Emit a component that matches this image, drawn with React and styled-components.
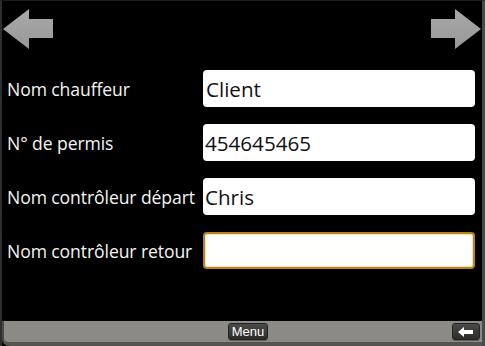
import React from 'react'
import styled, { createGlobalStyle } from 'styled-components'

const GlobalStyle = createGlobalStyle`
  html, body {
    margin: 0;
    padding: 0;
    background: #000;
  }
  body {
    font-family: 'Open Sans', 'DejaVu Sans', sans-serif;
  }
`

const Screen = styled.div`
  width: 485px;
  height: 346px;
  box-sizing: border-box;
  display: flex;
  flex-direction: column;
  background: #000;
  border-left: 2px solid #2e2e2e;
  border-right: 3px solid #4a4a4a;
  border-top: 1px solid #1c1c1c;
  overflow: hidden;
`

const Header = styled.div`
  height: 56px;
  display: flex;
  justify-content: space-between;
  align-items: flex-start;
  padding: 7px 0 0 0;
  box-sizing: border-box;
`

const ArrowButton = styled.button`
  width: 52px;
  height: 42px;
  padding: 0;
  border: 0;
  background: transparent;
  cursor: pointer;
  svg {
    display: block;
  }
`

const Form = styled.div`
  display: flex;
  flex-direction: column;
  gap: 17px;
  padding: 13px 8px 0 5px;
  flex: 1;
`

const Row = styled.div`
  display: grid;
  grid-template-columns: 196px 1fr;
  align-items: center;
  height: 37px;
`

const Label = styled.label`
  color: #f4f4f4;
  font-size: 17.6px;
  white-space: nowrap;
  letter-spacing: -0.1px;
`

const Field = styled.input`
  box-sizing: border-box;
  height: 37px;
  width: 272px;
  border-radius: 4px;
  border: ${(p) => (p.$focused ? '2px solid #b8821c' : '0')};
  box-shadow: ${(p) => (p.$focused ? 'inset 0 0 0 1px #f3e2b8' : 'none')};
  background: ${(p) => (p.$focused ? '#fffffd' : '#fff')};
  font-family: 'Open Sans', 'DejaVu Sans', sans-serif;
  font-size: 20.6px;
  color: #111;
  padding: 0 0 0 ${(p) => p.$pad || 2}px;
  outline: none;
`

const Footer = styled.div`
  height: 25px;
  box-sizing: border-box;
  background: #8b8a85;
  border-bottom: 4px solid #55544f;
  border-left: 2px solid #4a4a46;
  border-bottom-left-radius: 7px;
  display: flex;
  align-items: flex-start;
  justify-content: center;
  position: relative;
  padding-top: 2px;
`

const BarButton = styled.button`
  height: 17px;
  padding: 0 6px;
  background: linear-gradient(#4a4a48, #2c2c2b);
  border: 1px solid #222;
  border-radius: 3px;
  box-shadow: 0 1px 0 #5c5b57;
  color: #fff;
  font-family: 'Liberation Sans', Arial, sans-serif;
  font-size: 13px;
  line-height: 15px;
  display: flex;
  align-items: center;
  justify-content: center;
`

const MenuButton = styled(BarButton)`
  margin-left: 10px;
  width: 40px;
`

const BackButton = styled(BarButton)`
  position: absolute;
  right: 2px;
  top: 2px;
  width: 28px;
  padding: 0;
`

const BigArrow = ({ flip }) => (
  <svg width="52" height="42" viewBox="0 0 52 42">
    <defs>
      <linearGradient id={flip ? 'gr' : 'gl'} x1="0" y1="0" x2="0" y2="1">
        <stop offset="0" stopColor="#a9a9a9" />
        <stop offset="1" stopColor="#989898" />
      </linearGradient>
    </defs>
    <polygon
      transform={flip ? 'translate(52,0) scale(-1,1)' : undefined}
      points="1,21 27,1 27,11 51,11 51,30 27,30 27,41"
      fill={`url(#${flip ? 'gr' : 'gl'})`}
    />
  </svg>
)

const rows = [
  { label: 'Nom chauffeur', value: 'Client', pad: 3 },
  { label: 'N° de permis', value: '454645465', pad: 0 },
  { label: 'Nom contrôleur départ', value: 'Chris', pad: 2 },
  { label: 'Nom contrôleur retour', value: '', focused: true },
]

export default function App() {
  return (
    <Screen>
      <GlobalStyle />
      <Header>
        <ArrowButton aria-label="Précédent">
          <BigArrow />
        </ArrowButton>
        <ArrowButton aria-label="Suivant">
          <BigArrow flip />
        </ArrowButton>
      </Header>
      <Form>
        {rows.map((r) => (
          <Row key={r.label}>
            <Label>{r.label}</Label>
            <Field defaultValue={r.value} $focused={r.focused} $pad={r.pad} />
          </Row>
        ))}
      </Form>
      <Footer>
        <MenuButton>Menu</MenuButton>
        <BackButton aria-label="Retour">
          <svg width="16" height="10" viewBox="0 0 16 10">
            <polygon points="0,5 6,0 6,3 15,3 15,7 6,7 6,10" fill="#fff" />
          </svg>
        </BackButton>
      </Footer>
    </Screen>
  )
}
